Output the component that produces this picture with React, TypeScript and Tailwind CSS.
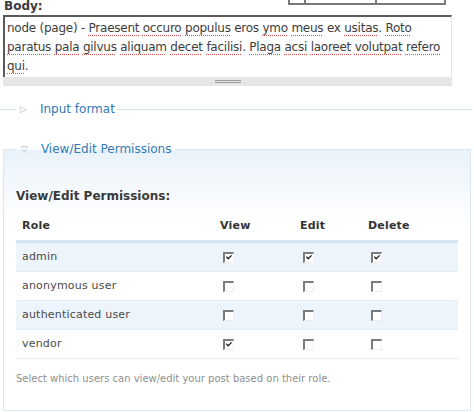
import React from "react";

const roles = [
  { name: "admin", perms: [true, true, true] },
  { name: "anonymous user", perms: [false, false, false] },
  { name: "authenticated user", perms: [false, false, false] },
  { name: "vendor", perms: [true, false, false] },
];

function Box({ on }: { on?: boolean }) {
  return (
    <span className="relative inline-block h-[11px] w-[11px] border-t-2 border-l-2 border-r border-b border-t-[#7c7c7c] border-l-[#7c7c7c] border-r-[#eeeeee] border-b-[#eeeeee] bg-white">
      {on && (
        <svg viewBox="0 0 9 9" className="absolute left-0 top-0 h-[9px] w-[9px]">
          <path d="M1.2 2.6 L3.2 4.8 L6.6 1.4" fill="none" stroke="#1f1f1f" strokeWidth="1.3" />
        </svg>
      )}
    </span>
  );
}

function Sp({ children }: { children: React.ReactNode }) {
  return (
    <span className="underline decoration-dotted decoration-[#e05b5b] underline-offset-[3px]">{children}</span>
  );
}

export default function App() {
  return (
    <div className="h-[412px] w-[474px] overflow-hidden bg-white font-['DejaVu_Sans',sans-serif] text-[#444]">
      <div className="flex h-[15px] items-start">
        <span className="pl-[4px] text-[12px] font-bold leading-[13px] text-[#3a3a3a]">Body:</span>
        <div className="ml-auto mr-[28px] flex h-[5px] w-[158px] border-x-2 border-b-2 border-[#7a7a7a]">
          <div className="w-[16px] border-r-2 border-[#7a7a7a]" />
          <div className="w-[71px] border-r-2 border-[#7a7a7a]" />
        </div>
      </div>

      <div className="ml-[3px] w-[449px]">
        <div className="h-[62px] border-l-2 border-t-2 border-r border-l-[#5a5a5a] border-t-[#5a5a5a] border-r-[#e2e2e2] pl-[2px] pt-[2px] text-[12px] leading-[19px] tracking-[-0.25px] text-[#3d3d3d]">
          node (page) - <Sp>Praesent</Sp> <Sp>occuro</Sp> <Sp>populus</Sp> eros <Sp>ymo</Sp> <Sp>meus</Sp> ex{" "}
          <Sp>usitas</Sp>. <Sp>Roto</Sp> <Sp>paratus</Sp> <Sp>pala</Sp> <Sp>gilvus</Sp> <Sp>aliquam</Sp>{" "}
          <Sp>decet</Sp> <Sp>facilisi</Sp>. <Sp>Plaga</Sp> <Sp>acsi</Sp> <Sp>laoreet</Sp> <Sp>volutpat</Sp>{" "}
          <Sp>refero</Sp> <Sp>qui</Sp>.
        </div>
        <div className="flex h-[9px] flex-col items-center justify-center gap-[1px] bg-[#e6e6e6]">
          <div className="h-px w-[26px] bg-[#9a9a9a]" />
          <div className="h-px w-[26px] bg-[#9a9a9a]" />
        </div>
      </div>

      <div className="mt-[16px] flex h-[14px] w-[472px] items-center">
        <div className="h-px w-[16px] bg-[#d3e3ee]" />
        <span className="ml-[4px] text-[9px] leading-none text-[#b5b5b5]">▷</span>
        <span className="ml-[13px] text-[12px] leading-[14px] text-[#2f7ab8]">Input format</span>
        <div className="ml-[2px] h-px flex-1 bg-[#d3e3ee]" />
      </div>

      <fieldset className="mx-[3px] mt-[26px] h-[269px] border border-[#dae8f1] bg-gradient-to-b from-[#e9f2fa] to-white to-[28%] px-[12px]">
        <legend className="ml-[1px] flex items-center px-[4px] text-[12px] leading-[14px]">
          <span className="text-[9px] leading-none text-[#b5b5b5]">▽</span>
          <span className="ml-[13px] text-[#2f7ab8]">View/Edit Permissions</span>
        </legend>

        <div className="pt-[33px] text-[12px] font-bold leading-[14px] text-[#3a3a3a]">View/Edit Permissions:</div>

        <div className="mt-[11px] w-[442px] text-[11px] tracking-[0.2px]">
          <div className="grid h-[29px] grid-cols-[198px_80px_68px_1fr] items-center border-b-[3px] border-[#d5e6f3] pb-[2px] font-bold text-[#333]">
            <span className="pl-[6px]">Role</span>
            <span className="pl-[6px]">View</span>
            <span className="pl-[6px]">Edit</span>
            <span className="pl-[6px]">Delete</span>
          </div>
          {roles.map((r, i) => (
            <div
              key={r.name}
              className={`grid h-[29px] grid-cols-[198px_80px_68px_1fr] items-center border-b border-[#e1edf5] ${
                i % 2 === 0 ? "bg-[#edf4fb]" : "bg-white"
              }`}
            >
              <span className="pl-[6px] text-[#4a4a4a]">{r.name}</span>
              {r.perms.map((p, j) => (
                <span key={j} className="flex pl-[9px]">
                  <Box on={p} />
                </span>
              ))}
            </div>
          ))}
        </div>

        <div className="mt-[14px] text-[10px] leading-[12px] text-[#8f8f8f]">
          Select which users can view/edit your post based on their role.
        </div>
      </fieldset>
    </div>
  );
}
